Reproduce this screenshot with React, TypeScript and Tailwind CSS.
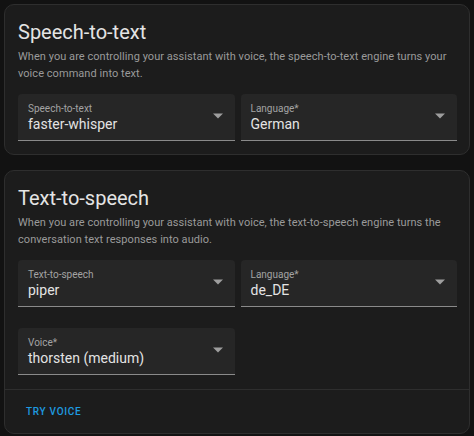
import { ReactNode } from 'react';

type FieldProps = {
  label: string;
  value: string;
};

function SelectField({ label, value }: FieldProps) {
  return (
    <div className="relative h-[47px] rounded-t-[4px] bg-[#262626] border-b border-[#8a8a8a]">
      <div className="absolute left-[10px] top-[8px] text-[10px] leading-[14px] text-[#a3a3a3]">{label}</div>
      <div className="absolute left-[10px] top-[21px] text-[14px] leading-[18px] text-[#e3e3e3]">{value}</div>
      <svg
        className="absolute right-[12px] top-[19px]"
        width="10"
        height="6"
        viewBox="0 0 10 5"
      >
        <path d="M0 0 L5 5 L10 0 Z" fill="#9e9e9e" />
      </svg>
    </div>
  );
}

function CardHeader({ title, description }: { title: string; description: string }) {
  return (
    <>
      <h2 className="text-[20px] leading-[26px] text-[#e4e4e4] font-normal">{title}</h2>
      <p className="mt-[3px] text-[11px] leading-[17px] tracking-[0.05px] text-[#9a9a9a]">{description}</p>
    </>
  );
}

function Card({ children }: { children: ReactNode }) {
  return <div className="rounded-[10px] border border-[#2e2e2e] bg-[#1c1c1c]">{children}</div>;
}

export default function App() {
  return (
    <div
      className="w-[474px] h-[436px] bg-[#121212] px-[4px] pt-[4px] overflow-hidden"
      style={{ fontFamily: 'Roboto, "Liberation Sans", sans-serif' }}
    >
      <Card>
        <div className="px-[13px] pt-[14px] pb-[13px]">
          <CardHeader
            title="Speech-to-text"
            description="When you are controlling your assistant with voice, the speech-to-text engine turns your voice command into text."
          />
          <div className="mt-[12px] grid grid-cols-2 gap-[6px] mr-[-1px]">
            <SelectField label="Speech-to-text" value="faster-whisper" />
            <SelectField label="Language*" value="German" />
          </div>
        </div>
      </Card>

      <div className="mt-[15px]">
        <Card>
          <div className="px-[13px] pt-[14px] pb-[14px]">
            <CardHeader
              title="Text-to-speech"
              description="When you are controlling your assistant with voice, the text-to-speech engine turns the conversation text responses into audio."
            />
            <div className="mt-[12px] grid grid-cols-2 gap-x-[6px] gap-y-[21px] mr-[-1px]">
              <SelectField label="Text-to-speech" value="piper" />
              <SelectField label="Language*" value="de_DE" />
              <SelectField label="Voice*" value="thorsten (medium)" />
            </div>
          </div>
          <div className="border-t border-[#2e2e2e] h-[44px] flex items-center px-[21px]">
            <span className="text-[10px] font-medium tracking-[0.7px] text-[#1e9be0]">TRY VOICE</span>
          </div>
        </Card>
      </div>
    </div>
  );
}
